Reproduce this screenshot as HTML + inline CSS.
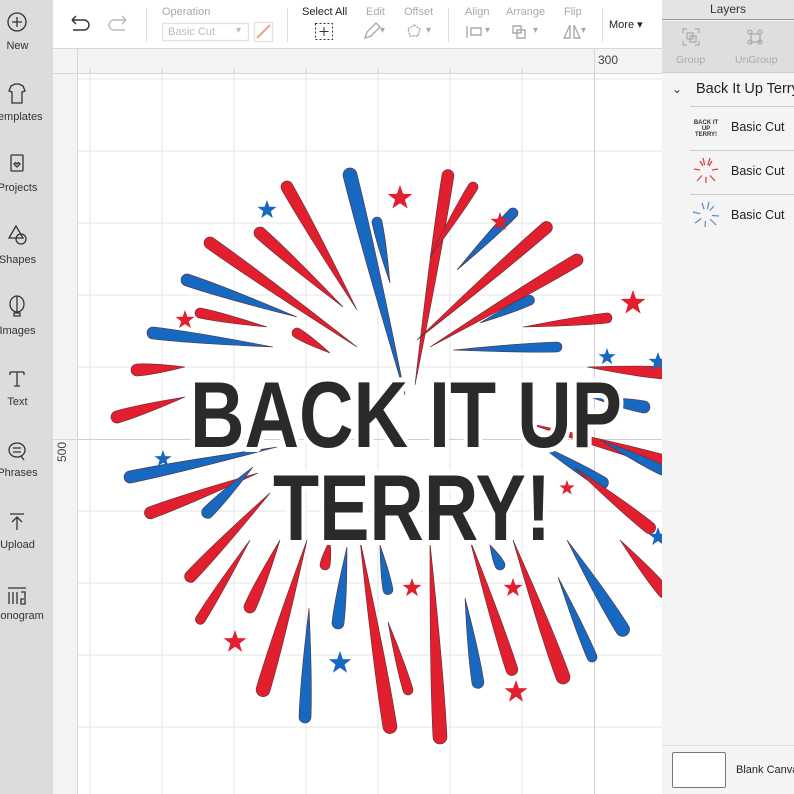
<!DOCTYPE html>
<html><head><meta charset="utf-8"><style>
*{margin:0;padding:0;box-sizing:border-box}
body{width:794px;height:794px;overflow:hidden;background:#fff;font-family:"Liberation Sans",sans-serif;position:relative}
.abs{position:absolute}
#side{left:0;top:0;width:53px;height:794px;background:#dcdcdc;overflow:hidden}
.si{position:absolute;left:-19px;width:73px;text-align:center;font-size:11px;color:#333}
#tb{left:53px;top:0;width:609px;height:49px;background:#fff;border-bottom:1px solid #d8d8d8}
.lbl{position:absolute;font-size:11px;color:#aaa}
.div{position:absolute;top:8px;width:1px;height:34px;background:#ddd}
#rp{left:662px;top:0;width:132px;height:794px;background:#f4f4f4;overflow:hidden}
</style></head><body>
<svg class="abs" style="left:0;top:0" width="794" height="794">
<rect x="53" y="49" width="609" height="745" fill="#fff"/>
<g stroke="#e6e6e6" stroke-width="1">
<line x1="90" y1="73" x2="90" y2="794"/><line x1="162" y1="73" x2="162" y2="794"/><line x1="234" y1="73" x2="234" y2="794"/><line x1="306" y1="73" x2="306" y2="794"/><line x1="378" y1="73" x2="378" y2="794"/><line x1="450" y1="73" x2="450" y2="794"/><line x1="522" y1="73" x2="522" y2="794"/>
<line x1="77" y1="151" x2="662" y2="151"/><line x1="77" y1="223" x2="662" y2="223"/><line x1="77" y1="295" x2="662" y2="295"/><line x1="77" y1="367" x2="662" y2="367"/><line x1="77" y1="511" x2="662" y2="511"/><line x1="77" y1="583" x2="662" y2="583"/><line x1="77" y1="655" x2="662" y2="655"/><line x1="77" y1="727" x2="662" y2="727"/>
<line x1="77" y1="79" x2="662" y2="79"/>
</g>
<g stroke="#cfcfcf"><line x1="594.5" y1="49" x2="594.5" y2="794"/><line x1="53" y1="439.5" x2="662" y2="439.5"/></g>
<rect x="53" y="49" width="609" height="24" fill="#f3f3f3"/>
<rect x="53" y="49" width="24" height="745" fill="#f3f3f3"/>
<g stroke="#d6d6d6"><line x1="53" y1="73.5" x2="662" y2="73.5"/><line x1="77.5" y1="49" x2="77.5" y2="794"/><line x1="594.5" y1="49" x2="594.5" y2="73"/><line x1="53" y1="439.5" x2="77" y2="439.5"/></g>
<g stroke="#d6d6d6"><line x1="90" y1="68" x2="90" y2="73"/><line x1="162" y1="68" x2="162" y2="73"/><line x1="234" y1="68" x2="234" y2="73"/><line x1="306" y1="68" x2="306" y2="73"/><line x1="378" y1="68" x2="378" y2="73"/><line x1="450" y1="68" x2="450" y2="73"/><line x1="522" y1="68" x2="522" y2="73"/></g>
<text x="598" y="64" font-size="12" fill="#444" font-family="Liberation Sans">300</text>
<text transform="translate(66,462) rotate(-90)" font-size="12" fill="#444" font-family="Liberation Sans">500</text>
<defs><polygon id="st" points="0,-10 2.35,-3.24 9.51,-3.09 3.8,1.24 5.88,8.09 0,4 -5.88,8.09 -3.8,1.24 -9.51,-3.09 -2.35,-3.24"/></defs>
<g id="streaks" stroke="#5a3030" stroke-width="0.6"></g>
<g fill="#1668c1"><use href="#st" transform="translate(267,210)"/><use href="#st" transform="translate(163,459) scale(.9)"/><use href="#st" transform="translate(340,663) scale(1.2)"/><use href="#st" transform="translate(607,357) scale(.9)"/><use href="#st" transform="translate(658,362)"/><use href="#st" transform="translate(658,537)"/></g>
<g fill="#e21f2f"><use href="#st" transform="translate(400,198) scale(1.3)"/><use href="#st" transform="translate(500,222)"/><use href="#st" transform="translate(185,320)"/><use href="#st" transform="translate(633,303) scale(1.3)"/><use href="#st" transform="translate(567,488) scale(.8)"/><use href="#st" transform="translate(412,588)"/><use href="#st" transform="translate(513,588)"/><use href="#st" transform="translate(235,642) scale(1.2)"/><use href="#st" transform="translate(516,692) scale(1.2)"/></g>
<g font-family="Liberation Sans" font-weight="bold" fill="#2a2a2a" stroke="#fff" stroke-width="10" paint-order="stroke" stroke-linejoin="round">
<text x="190" y="447" font-size="94" textLength="432" lengthAdjust="spacingAndGlyphs">BACK IT UP</text>
<text x="273" y="540" font-size="94" textLength="278" lengthAdjust="spacingAndGlyphs">TERRY!</text>
</g>
</svg>
<script>
(function(){
var R="#e21f2f",B="#1668c1";
var S=[
[B,350,175,405,395,7],[R,448,175,415,385,6],[R,287,187,357,310,6],[B,377,222,390,283,5],[R,260,233,343,307,6],[R,210,243,357,347,6],[B,187,280,297,317,6],[R,200,313,267,327,5],[B,153,333,273,347,6],[R,297,333,330,353,5],[R,137,370,185,367,6],[R,117,417,185,397,6],[B,130,477,277,447,6],[R,150,513,258,473,6],
[R,473,187,430,257,5],[B,513,213,457,270,5],[R,547,227,417,340,6],[R,577,260,430,347,6],[B,530,300,480,323,5],[R,607,318,523,327,5],[B,557,347,453,350,5],[R,664,373,587,367,6],[B,644,407,590,397,6],[R,668,462,527,423,6],[B,603,483,537,443,6],[B,207,513,253,467,6],
[R,200,620,250,540,5],[R,250,607,280,540,6],[R,263,690,307,540,7],[B,305,717,309,608,6],[R,325,565,330,540,5],[B,338,623,347,547,6],[R,390,727,360,540,7],[B,388,590,380,545,5],[R,408,690,388,622,5],[R,440,737,430,543,7],[B,478,683,465,598,6],[R,512,670,470,540,6],[B,500,565,490,545,5],[R,563,677,513,540,7],[B,592,657,558,577,5],[B,623,630,567,540,7],[R,664,592,620,540,6],[R,190,577,270,493,6],[R,650,528,575,468,6],[B,662,470,600,440,5]
];
function f(v){return v.toFixed(1);}
var g=document.getElementById("streaks"),h="";
S.forEach(function(s){var c=s[0],x1=s[1],y1=s[2],x2=s[3],y2=s[4],w=s[5];
var dx=x2-x1,dy=y2-y1,L=Math.sqrt(dx*dx+dy*dy),ux=dx/L,uy=dy/L,nx=-uy,ny=ux;
var ax=x1+nx*w,ay=y1+ny*w,bx=x1-nx*w,by=y1-ny*w;
var p1=[x1+ux*L*0.3+nx*w,y1+uy*L*0.3+ny*w],p2=[x1+ux*L*0.7+nx*w*0.45,y1+uy*L*0.7+ny*w*0.45];
var q2=[x1+ux*L*0.3-nx*w,y1+uy*L*0.3-ny*w],q1=[x1+ux*L*0.7-nx*w*0.45,y1+uy*L*0.7-ny*w*0.45];
h+='<path fill="'+c+'" d="M'+f(ax)+','+f(ay)+' C'+f(p1[0])+','+f(p1[1])+' '+f(p2[0])+','+f(p2[1])+' '+x2+','+y2+' C'+f(q1[0])+','+f(q1[1])+' '+f(q2[0])+','+f(q2[1])+' '+f(bx)+','+f(by)+' A'+w+','+w+' 0 0 0 '+f(ax)+','+f(ay)+'Z"/>';});
g.innerHTML=h;})();
</script>

<div id="side" class="abs">
<svg class="abs" style="left:0;top:0" width="53" height="640" fill="none" stroke="#333" stroke-width="1.3">
<circle cx="17" cy="22" r="9"/><path d="M17 17v10M12 22h10"/>
<path d="M11 86l4-2h4l4 2 2 5-3 1v11h-10v-11l-3-1z"/>
<rect x="11" y="155" width="12" height="16" rx="1"/><path d="M14 164l3 3 3-3-1.5-1.5-1.5 1.5-1.5-1.5z"/>
<path d="M16 226l-7 12h14z"/><circle cx="21" cy="239" r="5"/>
<ellipse cx="17" cy="304" rx="7" ry="8"/><path d="M17 296v16M14 313h6v3h-6z"/>
<path d="M10 372h14M10 372v3M24 372v3M17 372v14M14 386h6"/>
<ellipse cx="17" cy="450" rx="8" ry="7"/><path d="M13 448h8M13 452h8M21 456l3 4"/>
<path d="M10 514h14M17 530v-13M12 522l5-5 5 5"/>
<path d="M8 588h18M9 592v12M13 592v12M17 592v12M21 592h4v12h-4v-5h3"/>
</svg>
<div class="si" style="top:40px">New</div>
<div class="si" style="top:111px">Templates</div>
<div class="si" style="top:182px">Projects</div>
<div class="si" style="top:254px">Shapes</div>
<div class="si" style="top:325px">Images</div>
<div class="si" style="top:396px">Text</div>
<div class="si" style="top:467px">Phrases</div>
<div class="si" style="top:539px">Upload</div>
<div class="si" style="top:610px">Monogram</div>
</div>

<div id="tb" class="abs">
<svg class="abs" style="left:0;top:0" width="609" height="49" fill="none" stroke-width="1.4">
<path d="M19 20h12a5 5 0 010 10h-11M19 20l4-4M19 20l4 4" stroke="#333"/>
<path d="M73 20h-12a5 5 0 000 10h11M73 20l-4-4M73 20l-4 4" stroke="#bbb"/>
<rect x="109.5" y="23.5" width="86" height="17" stroke="#e3e3e3"/>
<rect x="201.5" y="22.5" width="18" height="19" stroke="#e3e3e3"/><path d="M204 38l13-13" stroke="#f0a090" stroke-width="2"/>
<rect x="262.5" y="23.5" width="17" height="16" stroke="#333" stroke-dasharray="2 2" stroke-width="1"/><path d="M271 27v9M266.5 31.5h9" stroke="#333" stroke-width="1"/>
<path d="M312 38l2-6 9-9 4 4-9 9z" stroke="#aaa"/>
<path d="M361 25l6 4-2 7h-8l-2-7z" stroke="#aaa" stroke-dasharray="2 1"/>
<path d="M414 26v12M418 28h10v7h-10z" stroke="#aaa"/>
<path d="M460 26h8v7h-8zM464 30h8v8h-8z" stroke="#aaa"/>
<path d="M517 25l-6 13h6zM521 25l6 13h-6z" stroke="#aaa"/>
</svg>
<div class="lbl" style="left:183px;top:25px;font-size:10px;color:#bbb">▾</div>
<div class="lbl" style="left:327px;top:25px;font-size:10px">▾</div>
<div class="lbl" style="left:373px;top:25px;font-size:10px">▾</div>
<div class="lbl" style="left:432px;top:25px;font-size:10px">▾</div>
<div class="lbl" style="left:480px;top:25px;font-size:10px">▾</div>
<div class="lbl" style="left:528px;top:25px;font-size:10px">▾</div>
<div class="div" style="left:93px"></div><div class="div" style="left:234px"></div><div class="div" style="left:395px"></div><div class="div" style="left:549px"></div>
<div class="lbl" style="left:109px;top:6px">Operation</div>
<div class="lbl" style="left:115px;top:26px;color:#bbb">Basic Cut</div>
<div class="lbl" style="left:249px;top:6px;color:#222">Select All</div>
<div class="lbl" style="left:313px;top:6px">Edit</div>
<div class="lbl" style="left:351px;top:6px">Offset</div>
<div class="lbl" style="left:412px;top:6px">Align</div>
<div class="lbl" style="left:453px;top:6px">Arrange</div>
<div class="lbl" style="left:511px;top:6px">Flip</div>
<div class="lbl" style="left:556px;top:18px;color:#222">More ▾</div>
</div>

<div id="rp" class="abs">
<div class="abs" style="left:0;top:0;width:132px;height:20px;background:#e4e4e4;border-bottom:1px solid #999;text-align:center;font-size:12px;color:#333;line-height:19px">Layers</div>
<div class="abs" style="left:0;top:21px;width:132px;height:52px;background:#dedede;border-bottom:1px solid #ccc"></div>
<svg class="abs" style="left:0;top:21px" width="132" height="30" fill="none" stroke="#aaa" stroke-width="1.2"><path d="M21 12v-4h4M33 8h4v4M37 20v4h-4M25 24h-4v-4"/><rect x="25" y="12" width="6" height="6"/><rect x="28" y="15" width="6" height="6"/><circle cx="88" cy="11" r="2"/><circle cx="98" cy="11" r="2"/><circle cx="88" cy="21" r="2"/><circle cx="98" cy="21" r="2"/><rect x="89" y="13" width="9" height="8"/></svg>
<div class="abs" style="left:14px;top:54px;font-size:10.5px;color:#aaa">Group</div>
<div class="abs" style="left:73px;top:54px;font-size:10.5px;color:#aaa">UnGroup</div>
<div class="abs" style="left:10px;top:82px;font-size:12px;color:#333">⌄</div>
<div class="abs" style="left:34px;top:81px;font-size:14.5px;color:#222;white-space:nowrap">Back It Up Terry</div>
<div class="abs" style="left:28px;top:106px;width:104px;height:1px;background:#ccc"></div>
<div class="abs" style="left:28px;top:150px;width:104px;height:1px;background:#ccc"></div>
<div class="abs" style="left:28px;top:194px;width:104px;height:1px;background:#ccc"></div>
<div class="abs" style="left:28px;top:120px;font-size:6px;font-weight:bold;color:#333;line-height:6px;text-align:center;width:32px">BACK IT UP<br>TERRY!</div>
<svg class="abs" style="left:28px;top:155px" width="32" height="32" stroke-width="1.3"><g stroke="#d44"><path d="M16 16l-6-10M16 16l6-10M16 16l-12-2M16 16l12-2M16 16l-9 10M16 16l9 10M16 16l0 12M16 16l-3-13M16 16l4-13"/></g><circle cx="16" cy="16" r="6" fill="#f4f4f4"/></svg>
<svg class="abs" style="left:28px;top:199px" width="32" height="32" stroke-width="1.2"><g stroke="#5a8ec8"><path d="M16 16l-4-12M16 16l8-9M16 16l-13-3M16 16l13 1M16 16l-11 8M16 16l10 10M16 16l-1 12M16 16l3-13"/></g><circle cx="16" cy="16" r="6" fill="#f4f4f4"/></svg>
<div class="abs" style="left:69px;top:120px;font-size:12.5px;color:#222">Basic Cut</div>
<div class="abs" style="left:69px;top:164px;font-size:12.5px;color:#222">Basic Cut</div>
<div class="abs" style="left:69px;top:208px;font-size:12.5px;color:#222">Basic Cut</div>
<div class="abs" style="left:0;top:745px;width:132px;height:49px;background:#f4f4f4;border-top:1px solid #ddd"></div>
<div class="abs" style="left:10px;top:752px;width:54px;height:36px;background:#fff;border:1px solid #777;border-radius:2px"></div>
<div class="abs" style="left:74px;top:764px;font-size:11px;color:#222;white-space:nowrap">Blank Canvas</div>
</div>
</body></html>
